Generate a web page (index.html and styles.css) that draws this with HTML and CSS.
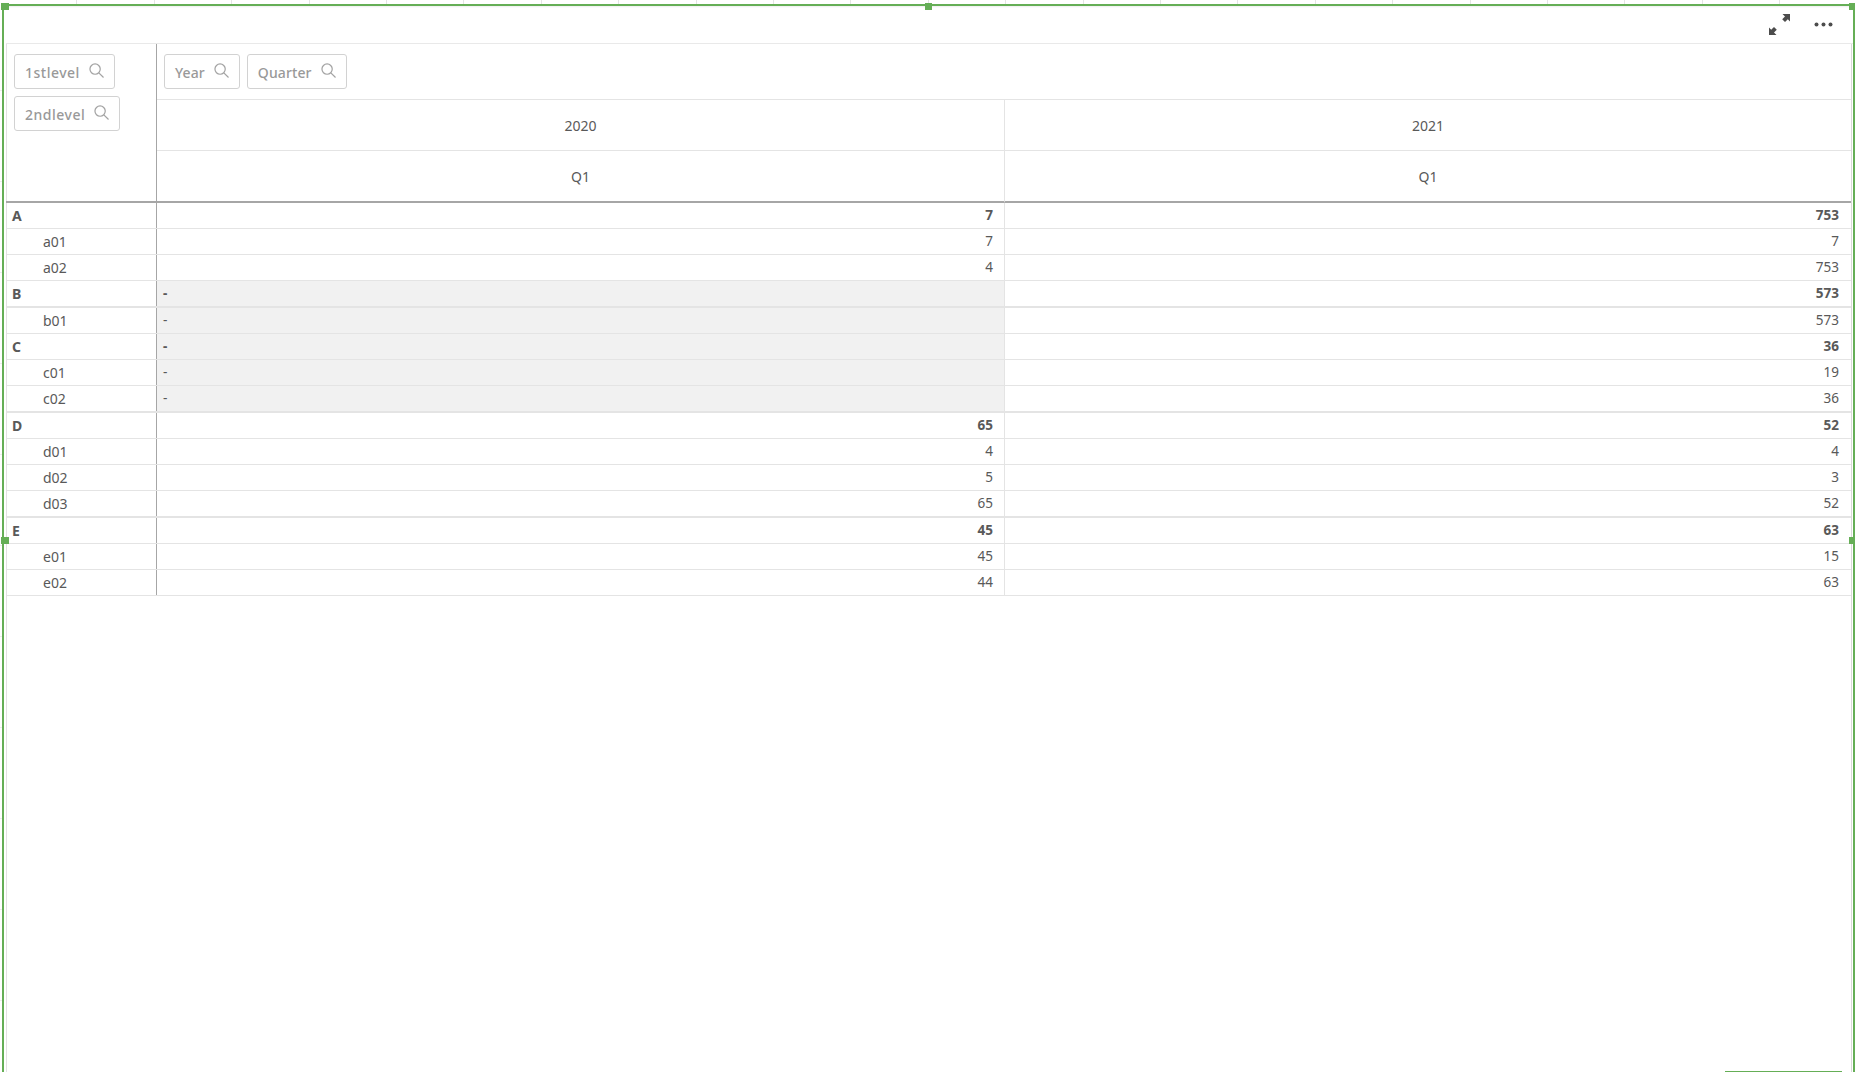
FILE: index.html
```html
<!DOCTYPE html>
<html lang="en">
<head>
<meta charset="utf-8">
<title>Pivot table</title>
<link rel="stylesheet" href="styles.css">
</head>
<body>
<div class="frame">
  <div class="toolbar">
    <button class="tool-btn" aria-label="Expand">
      <svg class="icon-expand" viewBox="0 0 21 21"><path d="M13.500 0H21V7.500L18.800 5.300 16 8 13.200 5.200 16 2.400zM7.500 21H0V13.500L2.200 15.700 5 13 7.800 15.800 5 18.600z"/></svg>
    </button>
    <button class="tool-btn" aria-label="More">
      <svg class="icon-more" viewBox="0 0 19 5"><circle cx="2.500" cy="2.500" r="2"/><circle cx="9.500" cy="2.500" r="2"/><circle cx="16.500" cy="2.500" r="2"/></svg>
    </button>
  </div>
  <div class="pivot">
    <div class="corner">
      <div class="chip"><span>1stlevel</span><svg class="lens" viewBox="0 0 16 16"><circle cx="6.500" cy="6.500" r="5.500"/><path d="M10.500 10.500l5 5"/></svg></div>
      <div class="chip"><span>2ndlevel</span><svg class="lens" viewBox="0 0 16 16"><circle cx="6.500" cy="6.500" r="5.500"/><path d="M10.500 10.500l5 5"/></svg></div>
    </div>
    <div class="col-filters">
      <div class="chip"><span>Year</span><svg class="lens" viewBox="0 0 16 16"><circle cx="6.500" cy="6.500" r="5.500"/><path d="M10.500 10.500l5 5"/></svg></div>
      <div class="chip"><span>Quarter</span><svg class="lens" viewBox="0 0 16 16"><circle cx="6.500" cy="6.500" r="5.500"/><path d="M10.500 10.500l5 5"/></svg></div>
    </div>
    <div class="head">2020</div><div class="head head-last">2021</div>
    <div class="head head-q">Q1</div><div class="head head-q head-last">Q1</div>

    <div class="row group"><div class="lbl">A</div><div class="num">7</div><div class="num last">753</div></div>
    <div class="row"><div class="lbl">a01</div><div class="num">7</div><div class="num last">7</div></div>
    <div class="row"><div class="lbl">a02</div><div class="num">4</div><div class="num last">753</div></div>
    <div class="row group sep"><div class="lbl">B</div><div class="num null">-</div><div class="num last">573</div></div>
    <div class="row"><div class="lbl">b01</div><div class="num null">-</div><div class="num last">573</div></div>
    <div class="row group"><div class="lbl">C</div><div class="num null">-</div><div class="num last">36</div></div>
    <div class="row"><div class="lbl">c01</div><div class="num null">-</div><div class="num last">19</div></div>
    <div class="row sep"><div class="lbl">c02</div><div class="num null">-</div><div class="num last">36</div></div>
    <div class="row group"><div class="lbl">D</div><div class="num">65</div><div class="num last">52</div></div>
    <div class="row"><div class="lbl">d01</div><div class="num">4</div><div class="num last">4</div></div>
    <div class="row"><div class="lbl">d02</div><div class="num">5</div><div class="num last">3</div></div>
    <div class="row sep"><div class="lbl">d03</div><div class="num">65</div><div class="num last">52</div></div>
    <div class="row group"><div class="lbl">E</div><div class="num">45</div><div class="num last">63</div></div>
    <div class="row"><div class="lbl">e01</div><div class="num">45</div><div class="num last">15</div></div>
    <div class="row"><div class="lbl">e02</div><div class="num">44</div><div class="num last">63</div></div>
  </div>
  <i class="handle h-tl"></i><i class="handle h-tm"></i><i class="handle h-tr"></i><i class="handle h-ml"></i><i class="handle h-mr"></i>
</div>
<i class="next-edge"></i>
</body>
</html>
```
FILE: styles.css
```css
html, body { margin: 0; height: 100%; }
body {
  position: relative;
  overflow: hidden;
  background-color: #fff;
  background-image:
    repeating-linear-gradient(90deg, transparent 0, transparent 76.4px, #e4e4e4 76.4px, #e4e4e4 77.4px),
    repeating-linear-gradient(180deg, transparent 0, transparent 90px, #eee 90px, #eee 91px);
  background-size: 100% 8px, 2px 100%;
  background-repeat: no-repeat;
  font-family: "Noto Sans", "Open Sans", sans-serif;
  color: #595959;
}
.frame {
  position: absolute;
  left: 2px; right: 0; top: 4px; bottom: 0;
  box-sizing: border-box;
  border: 2px solid #65ae56;
  border-bottom: 0;
  background: #fff;
  box-shadow: inset 0 2px 2px -1px #eee;
  display: flex;
  flex-direction: column;
  padding: 0 1px 0 2px;
}
.toolbar {
  height: 38px;
  flex: none;
  box-sizing: border-box;
  border-bottom: 1px solid #e9e9e9;
  margin: 0 -1px 0 0;
  display: flex;
  justify-content: flex-end;
  align-items: center;
  gap: 24px;
  padding: 0 20px 0 0;
}
.tool-btn { border: 0; background: none; padding: 0; display: flex; }
.tool-btn svg { fill: #4c4c4c; }
.icon-expand { width: 21px; height: 21px; }
.icon-more { width: 19px; height: 5px; }
.pivot {
  display: grid;
  grid-template-columns: 150px 848px 1fr;
  grid-template-rows: 56px 51px 52px auto;
  border-right: 1px solid #d9d9d9;
  border-left: 1px solid #e2e2e2;
  flex: 1;
  align-content: start;
}
.corner {
  grid-row: 1 / 4;
  box-sizing: border-box;
  border-right: 1px solid #a6a6a6;
  border-bottom: 2px solid #a6a6a6;
  margin-left: -1px;
  padding: 10px 0 0 8px;
  display: flex;
  flex-direction: column;
  align-items: flex-start;
  gap: 7px;
  letter-spacing: 0.5px;
}
.col-filters {
  grid-column: 2 / 4;
  box-sizing: border-box;
  border-bottom: 1px solid #e4e4e4;
  padding: 10px 0 0 7px;
  display: flex;
  gap: 7px;
  align-items: flex-start;
  letter-spacing: 0.1px;
}
.chip {
  box-sizing: border-box;
  height: 35px;
  border: 1px solid #d2d2d2;
  border-radius: 3px;
  display: flex;
  align-items: center;
  gap: 9px;
  padding: 0 10px;
  color: #999;
  font-size: 14px;
  font-weight: 500;
}
.chip span { position: relative; top: 1px; }
.lens { width: 15px; height: 15px; fill: none; stroke: #a3a3a3; stroke-width: 1.300; margin-top: -2px; }
.head {
  display: flex;
  align-items: center;
  justify-content: center;
  box-sizing: border-box;
  border-bottom: 1px solid #e4e4e4;
  border-right: 1px solid #e4e4e4;
  font-size: 14px;
}
.head-last { border-right: 0; }
.head-q { border-bottom: 2px solid #a6a6a6; }
.row {
  grid-column: 1 / 4;
  display: grid;
  grid-template-columns: subgrid;
  height: 26px;
  box-sizing: border-box;
  border-bottom: 1px solid #e4e4e4;
  font-size: 14px;
  line-height: 25px;
}
.row.sep { height: 27px; border-bottom-width: 2px; }
.row.group { font-weight: 700; }
.lbl {
  box-sizing: border-box;
  border-right: 1px solid #a6a6a6;
  padding-left: 36px;
}
.group .lbl { padding-left: 5px; }
.num {
  box-sizing: border-box;
  border-right: 1px solid #e4e4e4;
  text-align: right;
  padding-right: 11px;
  font-size: 13.500px;
}
.num.last { border-right: 0; padding-right: 12px; }
.num.null { background: #f1f1f1; text-align: left; padding-left: 6px; }
.handle { position: absolute; width: 8px; height: 7px; background: #65ae56; }
.h-tl { left: -3px; top: -3px; }
.h-tm { left: 921px; top: -3px; width: 7px; }
.h-tr { right: -2px; top: -3px; width: 6px; }
.h-ml { left: -3px; top: 531px; }
.h-mr { right: -2px; top: 531px; width: 6px; }
.next-edge { position: absolute; left: 1725px; width: 117px; bottom: 0; height: 1px; background: #65ae56; }
```
